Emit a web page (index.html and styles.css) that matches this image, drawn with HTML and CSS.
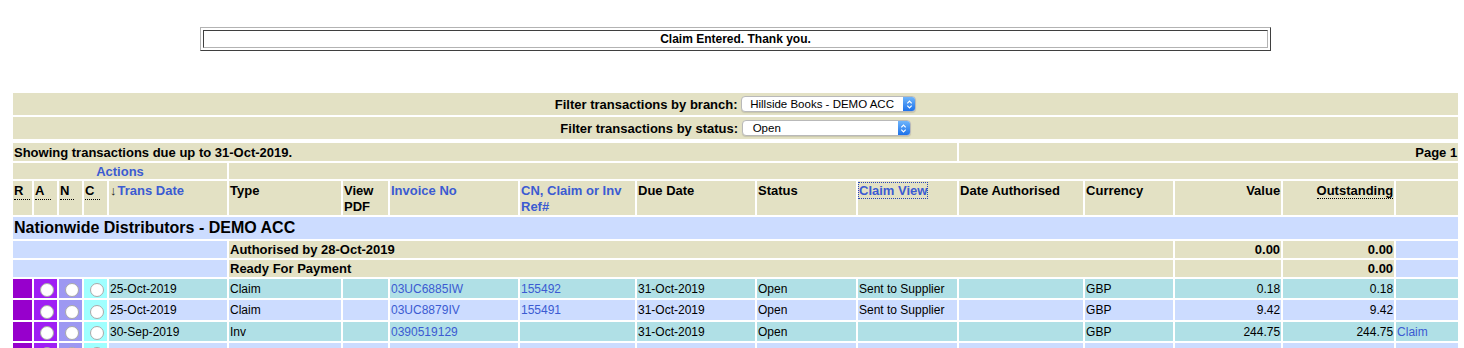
FILE: index.html
```html
<!DOCTYPE html>
<html lang="en">
  <head>
    <meta charset="UTF-8" />
    <meta name="viewport" content="width=device-width, initial-scale=1.0" />
    <!-- title of the page -->
    <title>Supplier Transactions</title>
    <link rel="stylesheet" href="styles.css">
  </head>
  <body>
    <!-- the main page wrapper -->
    <div class="page">
      <!-- message shown after a claim was entered -->
      <table class="notice">
        <tr>
          <td>Claim Entered. Thank you.</td>
        </tr>
      </table>

      <!-- the filters -->
      <table class="filters">
        <tr>
          <td>
            <label>Filter transactions by branch:</label>
            <span class="select select-branch">
              <span class="select-text">Hillside Books - DEMO ACC</span>
              <span class="select-btn">
                <svg width="7" height="11" viewBox="0 0 7 11">
                  <path d="M1.3 4.3 L3.5 2.1 L5.7 4.3 M1.3 6.7 L3.5 8.9 L5.7 6.7" fill="none" stroke="#fff" stroke-width="1.2" />
                </svg>
              </span>
            </span>
          </td>
        </tr>
        <tr>
          <td>
            <label>Filter transactions by status:</label>
            <span class="select select-status">
              <span class="select-text">Open</span>
              <span class="select-btn">
                <svg width="7" height="11" viewBox="0 0 7 11">
                  <path d="M1.3 4.3 L3.5 2.1 L5.7 4.3 M1.3 6.7 L3.5 8.9 L5.7 6.7" fill="none" stroke="#fff" stroke-width="1.2" />
                </svg>
              </span>
            </span>
          </td>
        </tr>
      </table>

      <!-- the transactions table -->
      <table class="trans">
        <colgroup>
          <col class="w-r" /><col class="w-a" /><col class="w-n" /><col class="w-c" />
          <col class="w-date" /><col class="w-type" /><col class="w-pdf" /><col class="w-inv" />
          <col class="w-ref" /><col class="w-due" /><col class="w-status" /><col class="w-view" />
          <col class="w-auth" /><col class="w-cur" /><col class="w-value" /><col class="w-out" />
          <col class="w-last" />
        </colgroup>

        <tr class="h-show">
          <td colspan="12" class="beige strong">Showing transactions due up to 31-Oct-2019.</td>
          <td colspan="5" class="beige strong num">Page 1</td>
        </tr>
        <tr class="h-actions">
          <td colspan="5" class="beige strong center"><a href="#">Actions</a></td>
          <td colspan="12" class="beige"></td>
        </tr>
        <tr class="h-head">
          <th><span class="abbr">R</span></th>
          <th><span class="abbr">A</span></th>
          <th><span class="abbr abbr-n">N</span></th>
          <th><span class="abbr abbr-c">C</span></th>
          <th><span class="sort">&darr;</span><a href="#">Trans Date</a></th>
          <th>Type</th>
          <th>View PDF</th>
          <th><a href="#">Invoice No</a></th>
          <th><a href="#">CN, Claim or Inv Ref#</a></th>
          <th>Due Date</th>
          <th>Status</th>
          <th><a href="#" class="focused">Claim View</a></th>
          <th>Date Authorised</th>
          <th>Currency</th>
          <th class="num">Value</th>
          <th class="num"><span class="dotted">Outstanding</span></th>
          <th></th>
        </tr>

        <!-- supplier group -->
        <tr class="h-group">
          <td colspan="17" class="group">Nationwide Distributors - DEMO ACC</td>
        </tr>
        <tr class="h-sub">
          <td colspan="5" class="blue"></td>
          <td colspan="9" class="beige strong">Authorised by 28-Oct-2019</td>
          <td class="beige strong num">0.00</td>
          <td class="beige strong num">0.00</td>
          <td class="blue"></td>
        </tr>
        <tr class="h-sub">
          <td colspan="5" class="blue"></td>
          <td colspan="9" class="beige strong">Ready For Payment</td>
          <td class="beige"></td>
          <td class="beige strong num">0.00</td>
          <td class="blue"></td>
        </tr>

        <!-- transaction rows -->
        <tr class="h-row teal">
          <td class="pick-r"></td>
          <td class="pick-a"><span class="radio"></span></td>
          <td class="pick-n"><span class="radio"></span></td>
          <td class="pick-c"><span class="radio"></span></td>
          <td>25-Oct-2019</td>
          <td>Claim</td>
          <td></td>
          <td><a href="#">03UC6885IW</a></td>
          <td><a href="#">155492</a></td>
          <td>31-Oct-2019</td>
          <td>Open</td>
          <td>Sent to Supplier</td>
          <td></td>
          <td>GBP</td>
          <td class="num">0.18</td>
          <td class="num">0.18</td>
          <td></td>
        </tr>
        <tr class="h-row2 blue">
          <td class="pick-r"></td>
          <td class="pick-a"><span class="radio"></span></td>
          <td class="pick-n"><span class="radio"></span></td>
          <td class="pick-c"><span class="radio"></span></td>
          <td>25-Oct-2019</td>
          <td>Claim</td>
          <td></td>
          <td><a href="#">03UC8879IV</a></td>
          <td><a href="#">155491</a></td>
          <td>31-Oct-2019</td>
          <td>Open</td>
          <td>Sent to Supplier</td>
          <td></td>
          <td>GBP</td>
          <td class="num">9.42</td>
          <td class="num">9.42</td>
          <td></td>
        </tr>
        <tr class="h-row teal">
          <td class="pick-r"></td>
          <td class="pick-a"><span class="radio"></span></td>
          <td class="pick-n"><span class="radio"></span></td>
          <td class="pick-c"><span class="radio"></span></td>
          <td>30-Sep-2019</td>
          <td>Inv</td>
          <td></td>
          <td><a href="#">0390519129</a></td>
          <td></td>
          <td>31-Oct-2019</td>
          <td>Open</td>
          <td></td>
          <td></td>
          <td>GBP</td>
          <td class="num">244.75</td>
          <td class="num">244.75</td>
          <td><a href="#">Claim</a></td>
        </tr>
        <tr class="h-row blue">
          <td class="pick-r"></td>
          <td class="pick-a"><span class="radio"></span></td>
          <td class="pick-n"><span class="radio"></span></td>
          <td class="pick-c"><span class="radio"></span></td>
          <td>30-Sep-2019</td>
          <td>Inv</td>
          <td></td>
          <td><a href="#">0390520040</a></td>
          <td></td>
          <td>31-Oct-2019</td>
          <td>Open</td>
          <td></td>
          <td></td>
          <td>GBP</td>
          <td class="num">209.75</td>
          <td class="num">209.75</td>
          <td><a href="#">Claim</a></td>
        </tr>
      </table>
    </div>
  </body>
</html>
```

FILE: styles.css
```css
/* removing default styling */
* {
  margin: 0;
  padding: 0;
  box-sizing: border-box;
}
/* the body */
body {
  font-family: "Liberation Sans", Arial, sans-serif;
  font-size: 12px;
  color: #000;
  background-color: #fff;
}
/* page wrapper */
.page {
  width: 1449px;
  margin-left: 11px;
  padding-top: 27px;
}
/* links */
a {
  color: #3b5bd2;
  text-decoration: none;
}
/* the notice box */
.notice {
  width: 1071px;
  margin: 0 auto;
  border: 1px solid;
  border-color: #b3b3b3 #3f3f3f #3f3f3f #b3b3b3;
  border-spacing: 2px;
}
.notice td {
  height: 18px;
  border: 1px solid;
  border-color: #3f3f3f #b3b3b3 #b3b3b3 #3f3f3f;
  text-align: center;
  font-weight: bold;
  font-size: 12px;
}
/* the filter bars */
.filters {
  width: 100%;
  margin-top: 40px;
  border-spacing: 2px;
}
.filters td {
  height: 22px;
  background-color: #e3e1c4;
  text-align: center;
  font-weight: bold;
  font-size: 13px;
}
.filters label {
  vertical-align: middle;
}
/* fake mac style select */
.select {
  display: inline-flex;
  align-items: center;
  vertical-align: middle;
  height: 16px;
  border: 1px solid #b9b9b9;
  border-radius: 4px;
  background-color: #fff;
  box-shadow: 0 1px 1px rgba(0, 0, 0, 0.12);
  font-weight: normal;
  font-size: 11.5px;
  text-align: left;
  overflow: hidden;
}
.select-branch {
  width: 175px;
}
.select-status {
  width: 169px;
}
.select-text {
  flex: 1;
  padding-left: 8px;
  white-space: nowrap;
}
.select-status .select-text {
  padding-left: 10px;
}
/* the blue arrows button */
.select-btn {
  display: flex;
  align-items: center;
  justify-content: center;
  width: 12px;
  height: 100%;
  background: linear-gradient(#6fb5fb, #1d72ea);
}
/* the transactions table */
.trans {
  width: 100%;
  table-layout: fixed;
  border-spacing: 2px;
}
.trans td,
.trans th {
  padding: 1px;
  font-size: 12px;
  line-height: 14px;
  font-weight: normal;
  text-align: left;
  vertical-align: middle;
  white-space: nowrap;
  overflow: hidden;
}
/* column widths */
.w-r { width: 19px; }
.w-a { width: 23px; }
.w-n { width: 23px; }
.w-c { width: 23px; }
.w-date { width: 118px; }
.w-type { width: 112px; }
.w-pdf { width: 45px; }
.w-inv { width: 128px; }
.w-ref { width: 115px; }
.w-due { width: 118px; }
.w-status { width: 99px; }
.w-view { width: 99px; }
.w-auth { width: 124px; }
.w-cur { width: 88px; }
.w-value { width: 106px; }
.w-out { width: 111px; }
.w-last { width: 62px; }
/* row heights */
.h-show { height: 18px; }
.h-actions { height: 16px; }
.h-head { height: 34px; }
.h-group { height: 22px; }
.h-sub { height: 17px; }
.h-row { height: 19px; }
.h-row2 { height: 20px; }
.h-sub td {
  line-height: 15px;
}
/* top rows sit a pixel lower */
.h-show td,
.h-actions td,
.trans .h-head th {
  padding-top: 2px;
  padding-bottom: 0;
}
/* cell colours */
.beige {
  background-color: #e3e1c4;
}
.blue td,
td.blue {
  background-color: #ccdcff;
}
.teal td {
  background-color: #b0e0e6;
}
.strong {
  font-weight: bold;
}
.trans .strong {
  font-weight: bold;
  font-size: 13px;
}
.trans .center {
  text-align: center;
}
.trans .num {
  text-align: right;
}
/* header row */
.trans th {
  background-color: #e3e1c4;
  vertical-align: top;
  font-weight: bold;
  font-size: 13px;
  line-height: 16px;
  white-space: normal;
}
.abbr {
  display: inline-block;
  width: 16px;
  border-bottom: 1px dotted #000;
}
.abbr-n {
  width: 14px;
}
.abbr-c {
  width: 15px;
}
.dotted {
  border-bottom: 1px dotted #000;
}
.sort {
  color: #222;
  font-weight: normal;
  margin-right: 1px;
}
.focused {
  outline: 1px dotted #2a45b8;
}
/* supplier group row */
.trans .group {
  background-color: #ccdcff;
  font-weight: bold;
  font-size: 16px;
  line-height: 18px;
}
/* the coloured action cells */
.trans .pick-r {
  background-color: #9700cc;
}
.trans .pick-a {
  background-color: #9f1ff4;
}
.trans .pick-n {
  background-color: #9d98f2;
}
.trans .pick-c {
  background-color: #a0ffff;
}
/* radio circles */
.radio {
  display: block;
  width: 14px;
  height: 14px;
  margin: 3px 0 0 5px;
  border: 1px solid #a9a9a9;
  border-radius: 50%;
  background-color: #fff;
}
```
